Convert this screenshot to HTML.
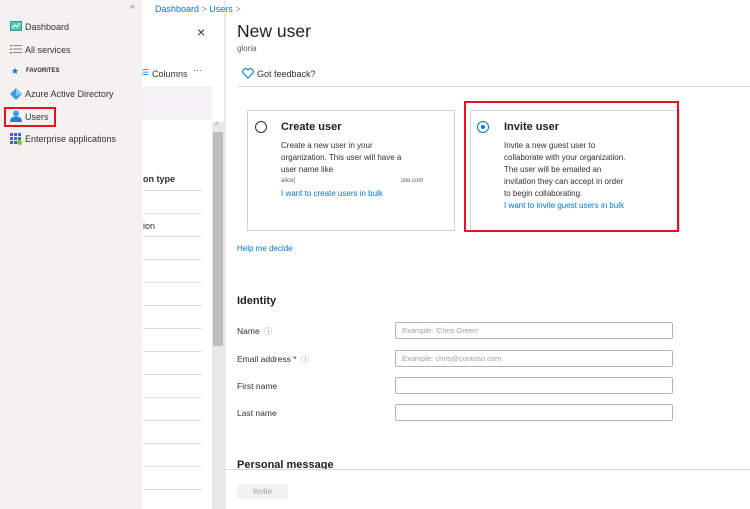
<!DOCTYPE html>
<html><head><style>
*{margin:0;padding:0;box-sizing:border-box}
body{width:750px;height:509px;overflow:hidden;position:relative;font-family:"Liberation Sans",sans-serif;background:#fff;color:#323130}
.a{position:absolute;white-space:nowrap}
.nav{left:0;top:0;width:142px;height:509px;background:#f3f2f1}
.ni{font-size:9px;color:#323130}
.row{position:absolute;left:143px;width:59px;height:1px;background:#e1dfdd}
.inp{position:absolute;left:395px;width:278px;height:17px;border:1px solid #b5b3b1;border-radius:2px;font-size:7.5px;color:#a19f9d;padding:3px 0 0 6px}
.lbl{font-size:8.5px;color:#323130}
.card{position:absolute;border:1px solid #d4d4d4;background:#fff}
.ct{font-size:11px;font-weight:bold;color:#201f1e}
.cd{font-size:8px;line-height:12px;color:#323130}
.a.link{color:#0078d4}
</style></head><body>
<div class="a nav"></div>
<div class="a" style="left:130px;top:1px;font-size:9px;color:#8a8886">«</div>
<svg class="a" style="left:10px;top:21px" width="12" height="10"><rect x="0.5" y="0.5" width="11" height="9" fill="#5ec2b6" stroke="#2c9c8e"/><polyline points="2,7 5,4 7,6 10,2" fill="none" stroke="#fff"/></svg>
<div class="a ni" style="left:25px;top:22px">Dashboard</div>
<svg class="a" style="left:10px;top:44px" width="12" height="10"><g fill="#7a9a4a"><rect x="0" y="1" width="2" height="1.5"/><rect x="0" y="4.5" width="2" height="1.5"/><rect x="0" y="8" width="2" height="1.5"/></g><g fill="#8a8886"><rect x="3" y="1" width="9" height="1"/><rect x="3" y="4.5" width="9" height="1"/><rect x="3" y="8" width="9" height="1"/></g></svg>
<div class="a ni" style="left:25px;top:45px">All services</div>
<div class="a" style="left:11px;top:66px;font-size:9px;color:#0078d4">★</div>
<div class="a" style="left:26px;top:68px;font-size:6px;font-weight:bold;color:#323130">FAVORITES</div>
<svg class="a" style="left:10px;top:88px" width="12" height="12"><polygon points="6,0 12,6 6,12 0,6" fill="#3aa0e0"/><polygon points="6,0 12,6 6,8" fill="#7fd0f5"/></svg>
<div class="a ni" style="left:25px;top:89px">Azure Active Directory</div>
<div class="a" style="left:4px;top:107px;width:52px;height:20px;border:2px solid #e81123"></div>
<svg class="a" style="left:10px;top:110px" width="12" height="12"><circle cx="6" cy="3.5" r="3" fill="#3aa0e0"/><path d="M0,12 Q0,6.5 6,6.5 Q12,6.5 12,12Z" fill="#1a86c8"/></svg>
<div class="a ni" style="left:25px;top:112px">Users</div>
<svg class="a" style="left:10px;top:133px" width="12" height="12"><g fill="#2f6bd0"><rect x="0" y="0" width="3" height="3"/><rect x="4" y="0" width="3" height="3"/><rect x="8" y="0" width="3" height="3"/><rect x="0" y="4" width="3" height="3"/><rect x="4" y="4" width="3" height="3"/><rect x="8" y="4" width="3" height="3"/><rect x="0" y="8" width="3" height="3"/><rect x="4" y="8" width="3" height="3"/></g><circle cx="9.5" cy="9.5" r="2.5" fill="#7cc142"/></svg>
<div class="a ni" style="left:25px;top:134px">Enterprise applications</div>

<div class="a" style="left:142px;top:0;width:83px;height:509px;background:#fff"></div>
<div class="a" style="left:197px;top:24px;font-size:14px;color:#323130">×</div>
<div class="a" style="left:142px;top:68px;font-size:8px;color:#0078d4">☰</div>
<div class="a ni" style="left:152px;top:69px">Columns</div>
<div class="a" style="left:193px;top:65px;font-size:9px;color:#605e5c">···</div>
<div class="a" style="left:142px;top:86px;width:70px;height:34px;background:#f5f2f8"></div>
<div class="a ni" style="left:143px;top:174px;font-weight:bold">on type</div>
<div class="a ni" style="left:143px;top:221px">ion</div>
<div class="row" style="top:190px"></div><div class="row" style="top:213px"></div><div class="row" style="top:236px"></div><div class="row" style="top:259px"></div><div class="row" style="top:282px"></div><div class="row" style="top:305px"></div><div class="row" style="top:328px"></div><div class="row" style="top:351px"></div><div class="row" style="top:374px"></div><div class="row" style="top:397px"></div><div class="row" style="top:420px"></div><div class="row" style="top:443px"></div><div class="row" style="top:466px"></div><div class="row" style="top:489px"></div>
<div class="a" style="left:212px;top:122px;width:12px;height:387px;background:#e9e8e7"></div>
<div class="a" style="left:213px;top:132px;width:10px;height:214px;background:#bebebe"></div>
<div class="a" style="left:215px;top:122px;font-size:7px;color:#8a8886">^</div>
<div class="a" style="left:224px;top:0;width:2px;height:509px;background:linear-gradient(90deg,#e0e0e0,#f5f5f5)"></div>

<div class="a" style="left:155px;top:4px;font-size:9px;color:#0078d4">Dashboard <span style="color:#8a8886">&gt;</span> Users <span style="color:#8a8886">&gt;</span></div>

<div class="a" style="left:237px;top:21px;font-size:17.5px;color:#201f1e">New user</div>
<div class="a" style="left:237px;top:44px;font-size:8px;color:#605e5c">gloria</div>
<svg class="a" style="left:242px;top:68px" width="12" height="11"><path d="M6,10 L1.2,5.2 A2.7,2.7 0 0 1 6,2 A2.7,2.7 0 0 1 10.8,5.2Z" fill="none" stroke="#0078d4" stroke-width="1.1"/></svg>
<div class="a ni" style="left:257px;top:69px">Got feedback?</div>
<div class="a" style="left:237px;top:86px;width:513px;height:1px;background:#e1dfdd"></div>

<div class="card" style="left:247px;top:110px;width:208px;height:121px"></div>
<div class="a" style="left:255px;top:121px;width:12px;height:12px;border:1px solid #323130;border-radius:50%"></div>
<div class="a ct" style="left:281px;top:121px">Create user</div>
<div class="a cd" style="left:281px;top:140px">Create a new user in your<br>organization. This user will have a<br>user name like</div>
<div class="a" style="left:281px;top:178px;font-size:6px;color:#605e5c">alice(</div>
<div class="a" style="left:401px;top:178px;font-size:6px;color:#605e5c">site.com</div>
<div class="a cd link" style="left:281px;top:188px">I want to create users in bulk</div>

<div class="card" style="left:470px;top:110px;width:210px;height:121px"></div>
<div class="a" style="left:464px;top:101px;width:215px;height:131px;border:2px solid #e81123"></div>
<div class="a" style="left:477px;top:121px;width:12px;height:12px;border:1px solid #0078d4;border-radius:50%"></div>
<div class="a" style="left:481px;top:125px;width:4px;height:4px;background:#0078d4;border-radius:50%"></div>
<div class="a ct" style="left:504px;top:121px">Invite user</div>
<div class="a cd" style="left:504px;top:140px">Invite a new guest user to<br>collaborate with your organization.<br>The user will be emailed an<br>invitation they can accept in order<br>to begin collaborating.</div>
<div class="a cd link" style="left:504px;top:200px">I want to invite guest users in bulk</div>

<div class="a cd link" style="left:237px;top:243px">Help me decide</div>

<div class="a" style="left:237px;top:295px;font-size:11px;font-weight:bold;color:#201f1e">Identity</div>
<div class="a lbl" style="left:237px;top:326px">Name <span style="color:#8a8886;font-size:8px">&nbsp;ⓘ</span></div>
<div class="a lbl" style="left:237px;top:354px">Email address <span style="color:#c50f1f">*</span> <span style="color:#8a8886;font-size:8px">&nbsp;ⓘ</span></div>
<div class="a lbl" style="left:237px;top:381px">First name</div>
<div class="a lbl" style="left:237px;top:408px">Last name</div>
<div class="inp" style="top:322px">Example: 'Chris Green'</div>
<div class="inp" style="top:350px">Example: chris@contoso.com</div>
<div class="inp" style="top:377px"></div>
<div class="inp" style="top:404px"></div>

<div class="a" style="left:237px;top:458px;font-size:11px;font-weight:bold;color:#201f1e;height:11px;overflow:hidden;line-height:14px">Personal message</div>
<div class="a" style="left:225px;top:469px;width:525px;height:1px;background:#d8d8d8"></div>
<div class="a" style="left:237px;top:484px;width:51px;height:15px;background:#f3f2f1;font-size:8px;color:#a19f9d;text-align:center;line-height:15px">Invite</div>
</body></html>
